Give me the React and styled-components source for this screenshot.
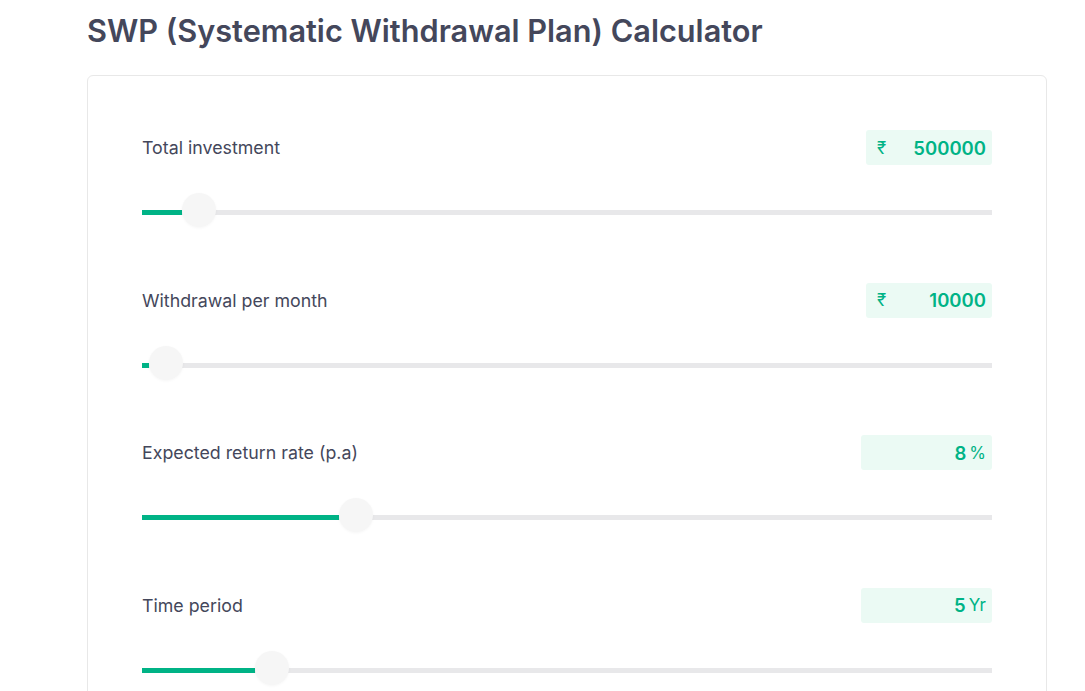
import React from "react";
import styled, { createGlobalStyle } from "styled-components";

const Global = createGlobalStyle`
  body {
    margin: 0;
    background: #fff;
    font-family: Inter, "Noto Sans", sans-serif;
    color: #44475b;
  }
`;

const Page = styled.div`
  padding: 10px 0 0 87px;
  width: 960px;
`;

const Title = styled.h1`
  margin: 0 0 23px;
  font-size: 30.7px;
  line-height: 42px;
  font-weight: 600;
  letter-spacing: 0;
  color: #44475b;
`;

const Card = styled.div`
  border: 1px solid #e8e8e8;
  border-radius: 6px;
  padding: 54px 54px 40px;
  display: flex;
  flex-direction: column;
  gap: 54.5px;
`;

const Row = styled.div`
  display: flex;
  flex-direction: column;
  gap: 28px;
`;

const Head = styled.div`
  display: flex;
  align-items: center;
  justify-content: space-between;
  height: 35px;
`;

const Label = styled.span`
  font-size: 17.8px;
  color: #44475b;
`;

const ValueBox = styled.div`
  width: ${(p) => p.$width}px;
  height: 35px;
  box-sizing: border-box;
  background: #ebfaf4;
  border-radius: 3px;
  display: flex;
  align-items: center;
  padding: 0 6px 0 11px;
  color: #00b386;
`;

const Prefix = styled.span`
  font-size: 17px;
  margin-right: auto;
`;

const Num = styled.span`
  margin-left: auto;
  font-size: 18.5px;
  font-weight: 600;
`;

const Suffix = styled.span`
  font-size: 17px;
  margin-left: 3px;
`;

const Slider = styled.div`
  position: relative;
  height: 35px;
`;

const Track = styled.div`
  position: absolute;
  left: 0;
  right: 0;
  top: 17px;
  height: 5px;
  background: #e8e8ea;
`;

const Fill = styled.div`
  height: 100%;
  background: #00b386;
`;

const Thumb = styled.div`
  position: absolute;
  top: 0;
  width: 34px;
  height: 34px;
  border-radius: 50%;
  background: #f6f6f6;
  box-shadow: 0 1px 3px rgba(0, 0, 0, 0.04);
`;

const rows = [
  { label: "Total investment", value: "500000", prefix: "₹", frac: 0.049, width: 126 },
  { label: "Withdrawal per month", value: "10000", prefix: "₹", frac: 0.0087, width: 126 },
  { label: "Expected return rate (p.a)", value: "8", suffix: "%", frac: 7 / 29, width: 131 },
  { label: "Time period", value: "5", suffix: "Yr", frac: 4 / 29, width: 131 },
];

function SliderRow({ label, value, prefix, suffix, frac, width }) {
  const left = frac * 816;
  return (
    <Row>
      <Head>
        <Label>{label}</Label>
        <ValueBox $width={width}>
          {prefix && <Prefix>{prefix}</Prefix>}
          <Num>{value}</Num>
          {suffix && <Suffix>{suffix}</Suffix>}
        </ValueBox>
      </Head>
      <Slider>
        <Track>
          <Fill style={{ width: left }} />
        </Track>
        <Thumb style={{ left }} />
      </Slider>
    </Row>
  );
}

export default function App() {
  return (
    <>
      <Global />
      <Page>
        <Title>SWP (Systematic Withdrawal Plan) Calculator</Title>
        <Card>
          {rows.map((r) => (
            <SliderRow key={r.label} {...r} />
          ))}
        </Card>
      </Page>
    </>
  );
}
